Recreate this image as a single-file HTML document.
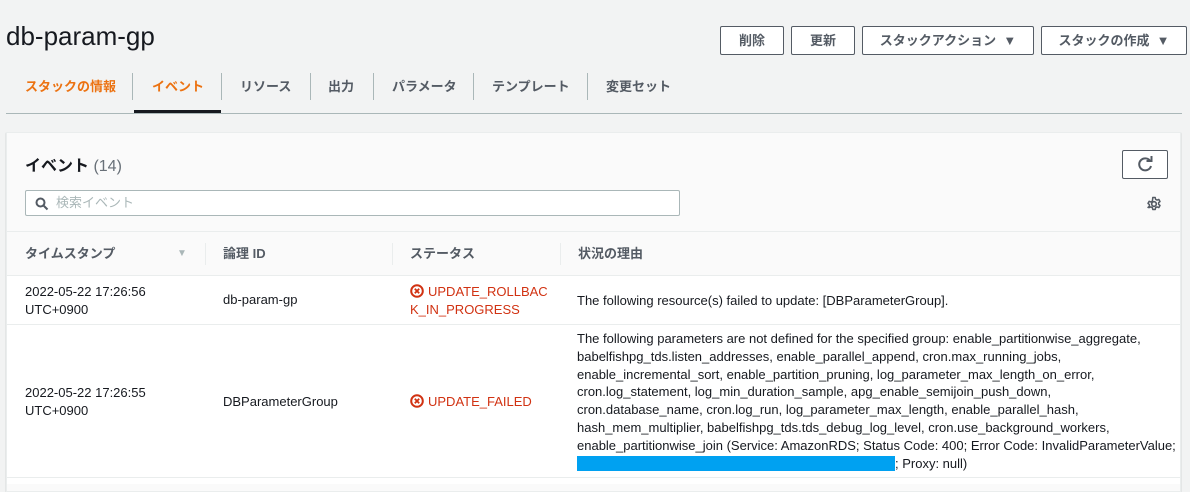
<!DOCTYPE html>
<html><head><meta charset="utf-8"><style>
*{box-sizing:border-box;margin:0;padding:0}
body{width:1190px;height:484px;overflow:hidden;background:#f2f3f3;font-family:"Liberation Sans","Noto Sans CJK JP",sans-serif;color:#16191f;position:relative}
.abs{position:absolute}
h1{position:absolute;left:6px;top:21px;font-size:26px;font-weight:400;color:#16191f}
.btn{position:absolute;top:26px;height:29px;border:1px solid #545b64;background:#fff;font-size:13px;font-weight:700;color:#545b64;text-align:center;line-height:27px;border-radius:2px}
.tab{position:absolute;top:76px;font-size:13px;font-weight:700;color:#545b64}
.tsep{position:absolute;top:73px;width:1px;height:27px;background:#aab7b8}
.panel{position:absolute;left:6px;top:132px;width:1175px;height:360px;background:#fafafa;border:1px solid #eaeded;box-shadow:0 1px 1px rgba(0,28,36,.3)}
.cell{position:absolute;font-size:13px;line-height:17px}
.red{color:#d13212}
.x{display:inline-block;vertical-align:-2px;margin-right:4px}
</style></head><body>
<h1>db-param-gp</h1>
<div class="btn" style="left:720px;width:64px">削除</div>
<div class="btn" style="left:791px;width:64px">更新</div>
<div class="btn" style="left:862px;width:172px">スタックアクション &nbsp;▼</div>
<div class="btn" style="left:1041px;width:146px">スタックの作成 &nbsp;▼</div>
<div class="tab" style="left:25px;color:#ec7211">スタックの情報</div>
<div class="tsep" style="left:132px"></div>
<div class="tab" style="left:152px;color:#ec7211">イベント</div>
<div class="abs" style="left:134px;top:110px;width:87px;height:3px;background:#16191f"></div>
<div class="tsep" style="left:221px"></div>
<div class="tab" style="left:240px">リソース</div>
<div class="tsep" style="left:310px"></div>
<div class="tab" style="left:328px">出力</div>
<div class="tsep" style="left:373px"></div>
<div class="tab" style="left:392px">パラメータ</div>
<div class="tsep" style="left:473px"></div>
<div class="tab" style="left:492px">テンプレート</div>
<div class="tsep" style="left:587px"></div>
<div class="tab" style="left:606px">変更セット</div>
<div class="abs" style="left:6px;top:113px;width:1176px;height:1px;background:#aab7b8"></div>
<div class="panel"></div>
<div class="abs" style="left:25px;top:152px;font-size:16px;font-weight:700">イベント <span style="font-weight:400;color:#687078">(14)</span></div>
<div class="abs" style="left:1122px;top:150px;width:46px;height:29px;border:1px solid #545b64;background:#fff;border-radius:2px">
<svg width="44" height="27" viewBox="0 0 44 27"><path d="M27.5 10.5A6 6 0 1 0 28 15" fill="none" stroke="#545b64" stroke-width="2"/><path d="M23.5 10h5V5" fill="none" stroke="#545b64" stroke-width="2"/></svg></div>
<div class="abs" style="left:25px;top:190px;width:655px;height:26px;border:1px solid #aab7b8;background:#fff;border-radius:2px;font-size:13px;color:#aab7b8;line-height:24px;padding-left:30px">検索イベント
<svg class="abs" style="left:9px;top:6px" width="14" height="14" viewBox="0 0 14 14"><circle cx="5.5" cy="5.5" r="4" fill="none" stroke="#545b64" stroke-width="2"/><path d="M8.5 8.5l4 4" stroke="#545b64" stroke-width="2"/></svg></div>
<svg class="abs" style="left:1146px;top:196px" width="16" height="16" viewBox="0 0 16 16"><circle cx="8" cy="8" r="2.3" fill="none" stroke="#545b64" stroke-width="1.6"/><path d="M6.8 1.5h2.4l.4 1.8 1.5.8 1.7-.7 1.2 2.1-1.4 1.2v1.6l1.4 1.2-1.2 2.1-1.7-.7-1.5.8-.4 1.8H6.8l-.4-1.8-1.5-.8-1.7.7L2 11.4l1.4-1.2V8.6L2 7.4l1.2-2.1 1.7.7 1.5-.8z" fill="none" stroke="#545b64" stroke-width="1.5" stroke-linejoin="round"/></svg>
<div class="abs" style="left:7px;top:231px;width:1173px;height:1px;background:#eaeded"></div>
<div class="abs" style="left:7px;top:275px;width:1173px;height:1px;background:#eaeded"></div>
<div class="abs" style="left:7px;top:276px;width:1173px;height:208px;background:#fff"></div>
<div class="abs" style="left:7px;top:324px;width:1173px;height:1px;background:#eaeded"></div>
<div class="abs" style="left:7px;top:477px;width:1173px;height:1px;background:#eaeded"></div>
<div class="cell" style="left:25px;top:245px;font-weight:700;color:#545b64">タイムスタンプ</div>
<div class="cell" style="left:177px;top:245px;color:#aab7b8;font-size:10px">▼</div>
<div class="abs" style="left:205px;top:243px;width:1px;height:22px;background:#eaeded"></div>
<div class="cell" style="left:223px;top:245px;font-weight:700;color:#545b64">論理 ID</div>
<div class="abs" style="left:392px;top:243px;width:1px;height:22px;background:#eaeded"></div>
<div class="cell" style="left:410px;top:245px;font-weight:700;color:#545b64">ステータス</div>
<div class="abs" style="left:560px;top:243px;width:1px;height:22px;background:#eaeded"></div>
<div class="cell" style="left:578px;top:245px;font-weight:700;color:#545b64">状況の理由</div>
<div class="cell" style="left:25px;top:283px;line-height:18px">2022-05-22 17:26:56<br>UTC+0900</div>
<div class="cell" style="left:223px;top:291px">db-param-gp</div>
<div class="cell red" style="left:410px;top:283px;line-height:18px"><svg class="x" width="14" height="14" viewBox="0 0 14 14"><circle cx="7" cy="7" r="5.8" fill="none" stroke="#d13212" stroke-width="2"/><path d="M4.8 4.8l4.4 4.4M9.2 4.8l-4.4 4.4" stroke="#d13212" stroke-width="1.8"/></svg>UPDATE_ROLLBAC<br>K_IN_PROGRESS</div>
<div class="cell" style="left:577px;top:292px">The following resource(s) failed to update: [DBParameterGroup].</div>
<div class="cell" style="left:25px;top:384px;line-height:18px">2022-05-22 17:26:55<br>UTC+0900</div>
<div class="cell" style="left:223px;top:393px">DBParameterGroup</div>
<div class="cell red" style="left:410px;top:393px"><svg class="x" width="14" height="14" viewBox="0 0 14 14"><circle cx="7" cy="7" r="5.8" fill="none" stroke="#d13212" stroke-width="2"/><path d="M4.8 4.8l4.4 4.4M9.2 4.8l-4.4 4.4" stroke="#d13212" stroke-width="1.8"/></svg>UPDATE_FAILED</div>
<div class="cell" style="left:577px;top:330px;width:600px;line-height:17.8px">The following parameters are not defined for the specified group: enable_partitionwise_aggregate,<br>babelfishpg_tds.listen_addresses, enable_parallel_append, cron.max_running_jobs,<br>enable_incremental_sort, enable_partition_pruning, log_parameter_max_length_on_error,<br>cron.log_statement, log_min_duration_sample, apg_enable_semijoin_push_down,<br>cron.database_name, cron.log_run, log_parameter_max_length, enable_parallel_hash,<br>hash_mem_multiplier, babelfishpg_tds.tds_debug_log_level, cron.use_background_workers,<br>enable_partitionwise_join (Service: AmazonRDS; Status Code: 400; Error Code: InvalidParameterValue;<br><span style="display:inline-block;width:318px;height:15px;background:#00a1f1;vertical-align:-3px"></span>; Proxy: null)</div>
</body></html>
